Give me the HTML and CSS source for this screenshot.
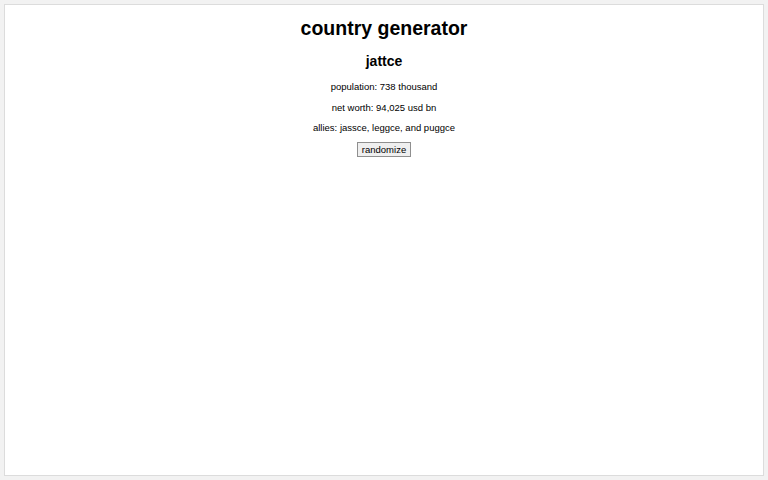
FILE: index.html
```html
<!DOCTYPE html>
<html lang="en">
<head>
    <meta charset="UTF-8">
    <meta name="viewport" content="width=device-width, initial-scale=1.0">
    <title>country generator</title>
    <link rel="stylesheet" href="styles.css">
</head>
<body>
    <div class="container">
        <h1>country generator</h1>
        <h2 id="countryName">jattce</h2>
        <p id="population">population: 738 thousand</p>
        <p id="netWorth">net worth: 94,025 usd bn</p>
        <p id="allies" class="last">allies: jassce, leggce, and puggce</p>
        <button id="randomize">randomize</button>
    </div>
</body>
</html>
```

FILE: styles.css
```css
body {
    font-family: "Liberation Sans", Arial, sans-serif;
    margin: 0;
    padding: 4px;
    background-color: #f2f2f2;
}

.container {
    box-sizing: border-box;
    height: calc(100vh - 8px);
    background-color: white;
    border: 1px solid #dcdcdc;
    text-align: center;
    padding-top: 12px;
}

h1 {
    font-size: 19.5px;
    line-height: 22px;
    margin: 0 0 14px;
}

h2 {
    font-size: 14px;
    line-height: 16px;
    margin: 0 0 12px;
}

p {
    font-size: 9.5px;
    line-height: 11px;
    margin: 0 0 9.5px;
}

p.last {
    margin-bottom: 6px;
}

button {
    font-family: "Liberation Sans", Arial, sans-serif;
    font-size: 9.5px;
    padding: 1px 4px;
    background-color: #efefef;
    border: 1px solid #8f8f8f;
    border-radius: 0;
}
```
